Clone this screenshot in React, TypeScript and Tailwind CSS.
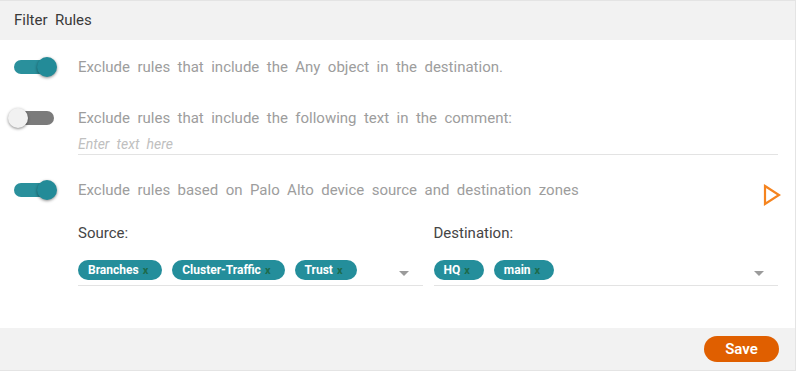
import React from 'react';

const Toggle: React.FC<{ on: boolean }> = ({ on }) => {
  return (
    <div className="w-[64px] shrink-0 flex items-center">
      <div className={`relative w-[40px] h-[14px] rounded-full ${on ? 'bg-[#2a909c]' : 'bg-[#7b7b7b]'}`}>
        <div
          className={`absolute top-[-3px] w-[20px] h-[20px] rounded-full shadow-[0_1px_3px_rgba(0,0,0,0.45)] ${
            on ? 'left-[23px] bg-[#238b98]' : 'left-[-6px] bg-[#f1f1f1]'
          }`}
        />
      </div>
    </div>
  );
};

const Chip: React.FC<{ label: string }> = ({ label }) => (
  <div className="h-[20px] rounded-full bg-[#248e9b] flex items-center pl-[10px] pr-[14px] text-white text-[12px] font-bold leading-none [word-spacing:0px]">
    <span>{label}</span>
    <span className="ml-[4px] text-[#1d6a4a] text-[11px] font-bold leading-none">x</span>
  </div>
);

const Caret = () => (
  <svg width="10" height="5" viewBox="0 0 10 5" className="shrink-0">
    <path d="M0 0 L10 0 L5 5 Z" fill="#9b9b9b" />
  </svg>
);

const ZoneField: React.FC<{ label: string; chips: string[] }> = ({ label, chips }) => (
  <div className="flex-1 flex flex-col">
    <div className="text-[15px] text-[#454545] h-[20px] leading-[20px]">{label}</div>
    <div className="mt-[17px] flex items-center border-b border-[#e3e3e3] pb-[5px] pr-[14px]">
      <div className="flex-1 flex gap-[10px]">
        {chips.map((c) => (
          <Chip key={c} label={c} />
        ))}
      </div>
      <div className="pt-[6px]">
        <Caret />
      </div>
    </div>
  </div>
);

export default function App() {
  return (
    <div
      className="w-[796px] h-[371px] border-t border-r border-b border-[#e4e4e4] bg-white flex flex-col [word-spacing:3.7px]"
      style={{ fontFamily: 'Roboto, "Noto Sans", sans-serif' }}
    >
      <div className="h-[39px] shrink-0 bg-[#f2f2f2] flex items-center px-[14px] text-[15px] text-[#3a3a3a]">
        Filter Rules
      </div>

      <div className="flex-1 flex flex-col pl-[14px] pr-[17px]">
        <div className="mt-[17px] flex items-center h-[20px]">
          <Toggle on />
          <div className="text-[15px] text-[#9d9d9d]">
            Exclude rules that include the Any object in the destination.
          </div>
        </div>

        <div className="mt-[31px] flex">
          <div className="h-[20px] flex items-center">
            <Toggle on={false} />
          </div>
          <div className="flex-1 flex flex-col">
            <div className="text-[15px] text-[#9d9d9d] h-[20px] leading-[20px]">
              Exclude rules that include the following text in the comment:
            </div>
            <div className="mt-[6px] text-[14px] italic text-[#c0c0c0] h-[21px] leading-[20px] border-b border-[#e3e3e3]">
              Enter text here
            </div>
          </div>
        </div>

        <div className="mt-[25px] flex items-center h-[20px]">
          <Toggle on />
          <div className="flex-1 text-[15px] text-[#9d9d9d]">
            Exclude rules based on Palo Alto device source and destination zones
          </div>
          <svg width="18" height="22" viewBox="0 0 18 22" className="mt-[10px] mr-[-3px]">
            <path d="M2 2 L16 11 L2 20 Z" fill="none" stroke="#f5841f" strokeWidth="2.2" strokeLinejoin="miter" />
          </svg>
        </div>

        <div className="mt-[23px] flex gap-[11px] pl-[64px]">
          <ZoneField label="Source:" chips={['Branches', 'Cluster-Traffic', 'Trust']} />
          <ZoneField label="Destination:" chips={['HQ', 'main']} />
        </div>
      </div>

      <div className="h-[42px] shrink-0 bg-[#f2f2f2] flex items-center justify-end pr-[16px]">
        <button className="w-[75px] h-[26px] rounded-full bg-[#e05f00] text-white text-[15px] font-semibold">
          Save
        </button>
      </div>
    </div>
  );
}
